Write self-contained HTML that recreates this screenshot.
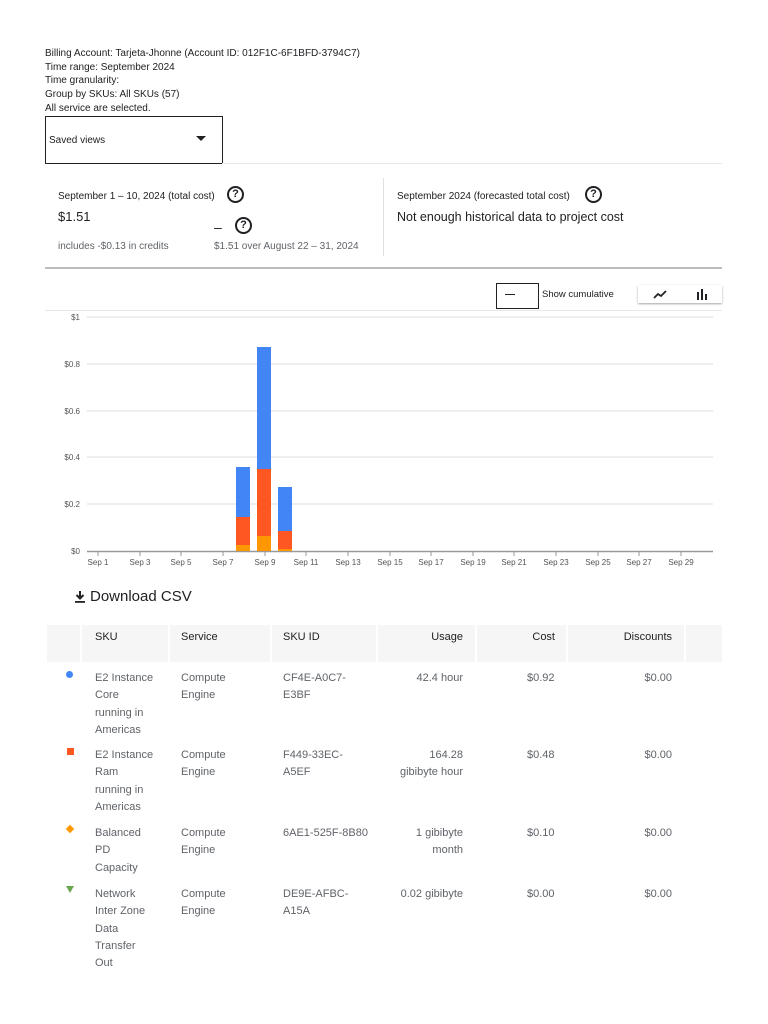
<!DOCTYPE html>
<html><head><meta charset="utf-8"><style>
body{margin:0;width:768px;height:1024px;background:#fff;font-family:"Liberation Sans",sans-serif;color:#202124;position:relative;overflow:hidden}
.a{position:absolute;white-space:nowrap}
.s{font-size:10px}
.g{color:#5f6368}
.q{display:inline-block;width:13px;height:13px;border:2px solid #202124;border-radius:50%;font-size:11px;font-weight:bold;text-align:center;line-height:13px;box-sizing:content-box}
.t{font-size:11px;line-height:17.3px;color:#5f6368}
.th{position:absolute;top:625px;height:37px;background:#f6f6f6;font-size:11px;color:#202124;line-height:24px;box-sizing:border-box;padding:0 8px}
.r{text-align:right}
</style></head><body>
<div class="a s" style="left:45px;top:47px;line-height:13.7px">Billing Account: Tarjeta-Jhonne (Account ID: 012F1C-6F1BFD-3794C7)<br>Time range: September 2024<br>Time granularity:<br>Group by SKUs: All SKUs (57)<br>All service are selected.</div>
<div class="a" style="left:45px;top:116px;width:176px;height:46px;border:1px solid #202124"></div>
<div class="a s" style="left:49px;top:135px">Saved views</div>
<div class="a" style="left:196px;top:136px;width:0;height:0;border-left:5px solid transparent;border-right:5px solid transparent;border-top:5px solid #202124"></div>
<div class="a" style="left:222px;top:163px;width:500px;height:1px;background:#e8e8e8"></div>
<div class="a s" style="left:58px;top:191px">September 1 – 10, 2024 (total cost)</div>
<div class="a q" style="left:227px;top:186px">?</div>
<div class="a" style="left:58px;top:209px;font-size:13px">$1.51</div>
<div class="a" style="left:214px;top:219px;font-size:14px">–</div>
<div class="a q" style="left:235px;top:217px">?</div>
<div class="a s g" style="left:58px;top:241px">includes -$0.13 in credits</div>
<div class="a s g" style="left:214px;top:241px">$1.51 over August 22 – 31, 2024</div>
<div class="a" style="left:383px;top:178px;width:1px;height:78px;background:#e0e0e0"></div>
<div class="a s" style="left:397px;top:191px">September 2024 (forecasted total cost)</div>
<div class="a q" style="left:585px;top:186px">?</div>
<div class="a" style="left:397px;top:210px;font-size:12.5px">Not enough historical data to project cost</div>
<div class="a" style="left:45px;top:267px;width:677px;height:2px;background:#bdbdbd"></div>
<div class="a" style="left:496px;top:283px;width:41px;height:24px;border:1px solid #202124"></div>
<div class="a" style="left:505px;top:294px;width:10px;height:1px;background:#202124"></div>
<div class="a s" style="left:542px;top:289px;font-size:9.5px">Show cumulative</div>
<div class="a" style="left:638px;top:285px;width:84px;height:18px;background:#fff;box-shadow:0 1px 2px rgba(0,0,0,.35)"></div>
<svg class="a" style="left:652px;top:288px" width="60" height="14"><polyline points="2,10 6,6 9,8 14,3" fill="none" stroke="#202124" stroke-width="1.8"/><rect x="45" y="4" width="2" height="8" fill="#202124"/><rect x="49" y="1" width="2" height="11" fill="#202124"/><rect x="53" y="6" width="2" height="6" fill="#202124"/></svg>
<div class="a" style="left:45px;top:310px;width:677px;height:1px;background:#e8e8e8"></div>
<svg class="a" style="left:0;top:0" width="768" height="580" font-family="Liberation Sans" font-size="8" fill="#555">
<g stroke="#ddd" stroke-width="1"><line x1="87" x2="713" y1="317" y2="317"/><line x1="87" x2="713" y1="364" y2="364"/><line x1="87" x2="713" y1="411" y2="411"/><line x1="87" x2="713" y1="457" y2="457"/><line x1="87" x2="713" y1="504" y2="504"/></g>
<line x1="87" x2="713" y1="551.5" y2="551.5" stroke="#999" stroke-width="1.5"/>
<g text-anchor="end"><text x="80" y="320">$1</text><text x="80" y="367">$0.8</text><text x="80" y="414">$0.6</text><text x="80" y="460">$0.4</text><text x="80" y="507">$0.2</text><text x="80" y="554">$0</text></g>
<g text-anchor="middle" stroke="none">
<text x="98" y="565">Sep 1</text><text x="140" y="565">Sep 3</text><text x="181" y="565">Sep 5</text><text x="223" y="565">Sep 7</text><text x="265" y="565">Sep 9</text><text x="306" y="565">Sep 11</text><text x="348" y="565">Sep 13</text><text x="390" y="565">Sep 15</text><text x="431" y="565">Sep 17</text><text x="473" y="565">Sep 19</text><text x="514" y="565">Sep 21</text><text x="556" y="565">Sep 23</text><text x="598" y="565">Sep 25</text><text x="639" y="565">Sep 27</text><text x="681" y="565">Sep 29</text></g>
<g stroke="#999"><line x1="98" x2="98" y1="552" y2="556"/><line x1="140" x2="140" y1="552" y2="556"/><line x1="181" x2="181" y1="552" y2="556"/><line x1="223" x2="223" y1="552" y2="556"/><line x1="265" x2="265" y1="552" y2="556"/><line x1="306" x2="306" y1="552" y2="556"/><line x1="348" x2="348" y1="552" y2="556"/><line x1="390" x2="390" y1="552" y2="556"/><line x1="431" x2="431" y1="552" y2="556"/><line x1="473" x2="473" y1="552" y2="556"/><line x1="514" x2="514" y1="552" y2="556"/><line x1="556" x2="556" y1="552" y2="556"/><line x1="598" x2="598" y1="552" y2="556"/><line x1="639" x2="639" y1="552" y2="556"/><line x1="681" x2="681" y1="552" y2="556"/></g>
<rect x="236" y="467" width="14" height="50" fill="#4285f4"/><rect x="236" y="517" width="14" height="28" fill="#ff5722"/><rect x="236" y="545" width="14" height="6" fill="#ff9800"/>
<rect x="257" y="347" width="14" height="122" fill="#4285f4"/><rect x="257" y="469" width="14" height="67" fill="#ff5722"/><rect x="257" y="536" width="14" height="15" fill="#ff9800"/>
<rect x="278" y="487" width="14" height="44" fill="#4285f4"/><rect x="278" y="531" width="14" height="18" fill="#ff5722"/><rect x="278" y="549" width="14" height="2" fill="#ff9800"/>
</svg>
<svg class="a" style="left:73px;top:590px" width="14" height="14"><path d="M7 1v7M3.5 5l3.5 3.5L10.5 5" fill="none" stroke="#202124" stroke-width="2"/><rect x="2" y="11" width="10" height="1.8" fill="#202124"/></svg>
<div class="a" style="left:90px;top:588px;font-size:15px">Download CSV</div>
<div class="th" style="left:47px;width:33px"></div>
<div class="th" style="left:82px;width:86px;padding-left:13px">SKU</div>
<div class="th" style="left:170px;width:100px;padding-left:11px">Service</div>
<div class="th" style="left:272px;width:104px;padding-left:11px">SKU ID</div>
<div class="th r" style="left:378px;width:97px;padding-right:12px">Usage</div>
<div class="th r" style="left:477px;width:89px;padding-right:11px">Cost</div>
<div class="th r" style="left:568px;width:116px;padding-right:12px">Discounts</div>
<div class="th" style="left:686px;width:36px"></div>
<div class="a" style="left:66px;top:671px;width:7px;height:7px;border-radius:50%;background:#4285f4"></div>
<div class="a" style="left:67px;top:748px;width:7px;height:7px;background:#ff5722"></div>
<div class="a" style="left:67px;top:826px;width:6px;height:6px;background:#ff9800;transform:rotate(45deg)"></div>
<div class="a" style="left:66px;top:886px;width:0;height:0;border-left:4.5px solid transparent;border-right:4.5px solid transparent;border-top:7px solid #6aa84f"></div>
<div class="a t" style="left:95px;top:670px">E2 Instance<br>Core<br>running in<br>Americas</div>
<div class="a t" style="left:95px;top:747px">E2 Instance<br>Ram<br>running in<br>Americas</div>
<div class="a t" style="left:95px;top:825px">Balanced<br>PD<br>Capacity</div>
<div class="a t" style="left:95px;top:886px">Network<br>Inter Zone<br>Data<br>Transfer<br>Out</div>
<div class="a t" style="left:181px;top:670px">Compute<br>Engine</div>
<div class="a t" style="left:181px;top:747px">Compute<br>Engine</div>
<div class="a t" style="left:181px;top:825px">Compute<br>Engine</div>
<div class="a t" style="left:181px;top:886px">Compute<br>Engine</div>
<div class="a t" style="left:283px;top:670px">CF4E-A0C7-<br>E3BF</div>
<div class="a t" style="left:283px;top:747px">F449-33EC-<br>A5EF</div>
<div class="a t" style="left:283px;top:825px">6AE1-525F-8B80</div>
<div class="a t" style="left:283px;top:886px">DE9E-AFBC-<br>A15A</div>
<div class="a t r" style="right:305px;top:670px">42.4 hour</div>
<div class="a t r" style="right:305px;top:747px">164.28<br>gibibyte hour</div>
<div class="a t r" style="right:305px;top:825px">1 gibibyte<br>month</div>
<div class="a t r" style="right:305px;top:886px">0.02 gibibyte</div>
<div class="a t" style="left:527px;top:670px">$0.92</div>
<div class="a t" style="left:527px;top:747px">$0.48</div>
<div class="a t" style="left:527px;top:825px">$0.10</div>
<div class="a t" style="left:527px;top:886px">$0.00</div>
<div class="a t r" style="right:96px;top:670px">$0.00</div>
<div class="a t r" style="right:96px;top:747px">$0.00</div>
<div class="a t r" style="right:96px;top:825px">$0.00</div>
<div class="a t r" style="right:96px;top:886px">$0.00</div>
</body></html>
